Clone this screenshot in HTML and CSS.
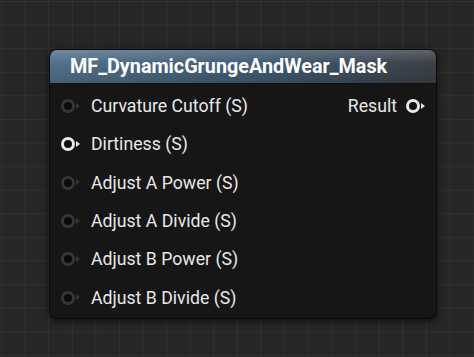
FILE: index.html
```html
<!DOCTYPE html>
<html lang="en">
<head>
    <meta charset="UTF-8">
    <title>MF_DynamicGrungeAndWear_Mask</title>
    <link rel="stylesheet" href="styles.css">
</head>
<body>
    <div class="graph">
        <div class="node">
            <div class="node-title">MF_DynamicGrungeAndWear_Mask</div>
            <div class="node-body">
                <div class="inputs">
                    <div class="pin-row"><span class="pin"></span>Curvature Cutoff (S)</div>
                    <div class="pin-row"><span class="pin linked"></span>Dirtiness (S)</div>
                    <div class="pin-row"><span class="pin"></span>Adjust A Power (S)</div>
                    <div class="pin-row"><span class="pin"></span>Adjust A Divide (S)</div>
                    <div class="pin-row"><span class="pin"></span>Adjust B Power (S)</div>
                    <div class="pin-row"><span class="pin"></span>Adjust B Divide (S)</div>
                </div>
                <div class="outputs">
                    <div class="pin-row">Result<span class="pin linked"></span></div>
                </div>
            </div>
        </div>
    </div>
</body>
</html>
```

FILE: styles.css
```css
body {
    margin: 0;
    background: #262626;
    font-family: Roboto, "Liberation Sans", sans-serif;
}
.graph {
    width: 474px;
    height: 357px;
    padding: 49px 0 0 49px;
    box-sizing: border-box;
    background-color: #262626;
    background-image:
        linear-gradient(to right, rgba(255, 255, 255, 0.045) 1px, transparent 1px),
        linear-gradient(to bottom, rgba(255, 255, 255, 0.045) 1px, transparent 1px);
    background-size: 23.6px 23.6px;
    background-position: 1px 1px;
}
.node {
    width: 388px;
    height: 270px;
    box-sizing: border-box;
    border: 1px solid #0a0a0a;
    border-radius: 8px;
    background: #161616;
    box-shadow: 0 2px 6px rgba(0, 0, 0, 0.6);
    overflow: hidden;
}
.node-title {
    height: 33px;
    padding-left: 20px;
    display: flex;
    align-items: center;
    color: #fff;
    font-size: 19.8px;
    font-weight: bold;
    background:
        linear-gradient(to bottom, rgba(255, 255, 255, 0.18), rgba(255, 255, 255, 0) 40%, rgba(0, 0, 0, 0.15)),
        linear-gradient(to right, #52718b, #405b72 55%, #3b4046);
    border-bottom: 1px solid #101010;
}
.node-body {
    display: flex;
    justify-content: space-between;
    padding: 3px 16px 0 11px;
}
.pin-row {
    height: 38.3px;
    display: flex;
    align-items: center;
    gap: 16px;
    color: #e8e8e8;
    font-size: 17.7px;
}
.pin {
    position: relative;
    width: 8px;
    height: 8px;
    border: 3px solid #363636;
    border-radius: 50%;
    background: #0a0a0a;
}
.pin::after {
    content: "";
    position: absolute;
    right: -8px;
    top: 0.5px;
    border-left: 4px solid #363636;
    border-top: 3.5px solid transparent;
    border-bottom: 3.5px solid transparent;
}
.pin.linked {
    border-color: #e8e8e8;
    background: #111;
}
.pin.linked::after {
    border-left-color: #e8e8e8;
}
.outputs .pin-row {
    gap: 9px;
}
```
